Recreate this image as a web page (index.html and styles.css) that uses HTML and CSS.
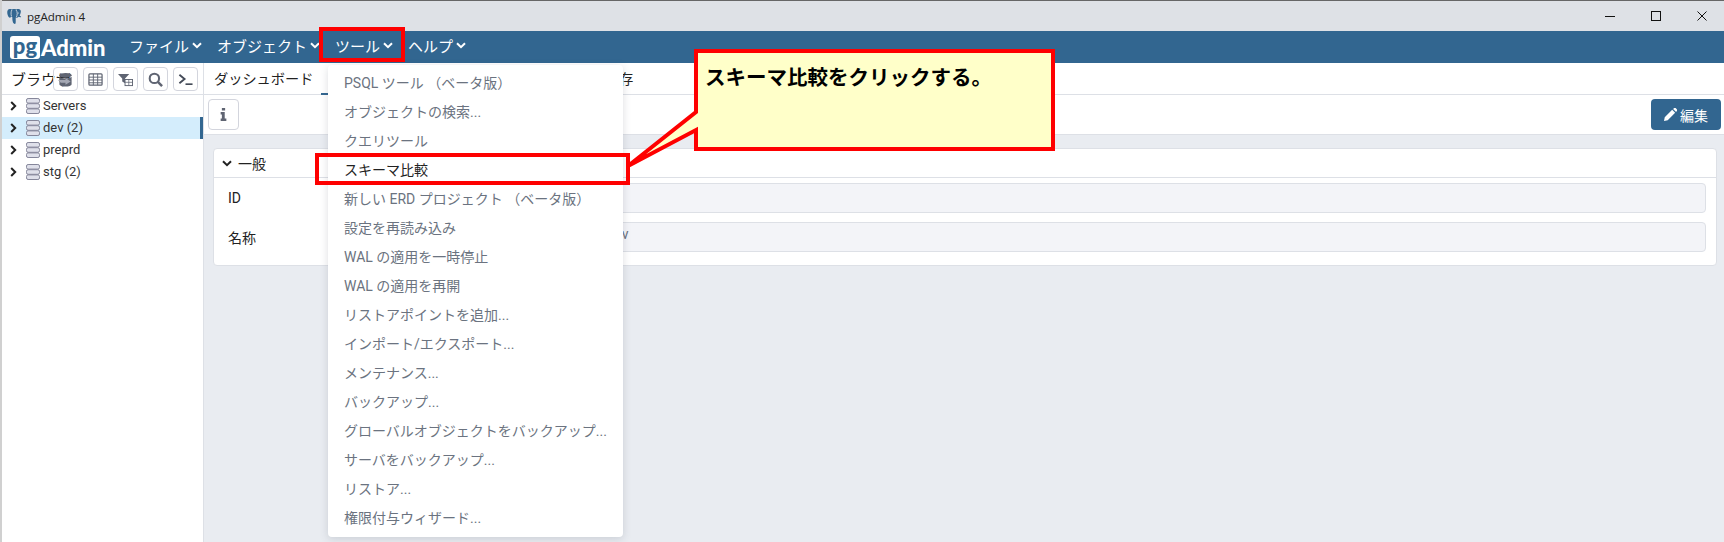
FILE: index.html
```html
<!DOCTYPE html>
<html lang="ja">
<head>
    <meta charset="UTF-8">
    <meta name="viewport" content="width=device-width, initial-scale=1.0">
    <title>pgAdmin 4</title>
    <link rel="stylesheet" href="styles.css">
</head>
<body>
    <svg class="sprites" aria-hidden="true">
        <symbol id="chevron" viewBox="0 0 10 7">
            <path d="M1 1.2 5 5.2 9 1.2" fill="none" stroke="currentColor" stroke-width="2"/>
        </symbol>
        <symbol id="chevron-right" viewBox="0 0 7 10">
            <path d="M1.2 1 5.2 5 1.2 9" fill="none" stroke="currentColor" stroke-width="2"/>
        </symbol>
        <symbol id="server" viewBox="0 0 14 16">
            <g fill="#dfe0ea" stroke="#85869a" stroke-width="1">
                <rect x="0.5" y="0.5" width="13" height="4.6" rx="1.6"/>
                <rect x="0.5" y="5.7" width="13" height="4.6" rx="1.6"/>
                <rect x="0.5" y="10.9" width="13" height="4.6" rx="1.6"/>
            </g>
        </symbol>
    </svg>

    <div class="window">
        <div class="titlebar">
            <div class="app-title">
                <svg class="elephant" viewBox="0 0 16 17">
                    <path d="M3 .5C1 .5 0 2.500 .3 5c.3 2.300 1.300 4.500 2.700 4.800.8.200 1.100-.6 1.300-1.500.4.500.9.900 1.400 1-.1 2.500.2 6 1.900 7 1.100.6 1.700-.4 1.700-2V9.800c1.300.3 2.400-.2 2.900-1.100.8.500 2.300.8 2.800.2.300-.5-1-.9-1.500-1.600 1.100-2 1.700-4 1-5.400C13.700.5 11.500.2 10 .9 8.500.3 6.500.3 5.200.9 4.500.6 3.700.5 3 .5z" fill="#336791"/>
                    <path d="M5.200 1.500c-1 1.700-1.100 4.500-.5 6.500M9.600 1.500c1.700 1.700 1.700 5.500.3 7.800M12.100 4.300l-.2 1.200" fill="none" stroke="#dee1e6" stroke-width=".9"/>
                </svg>
                <span>pgAdmin 4</span>
            </div>
            <div class="window-controls">
                <svg viewBox="0 0 12 12"><path d="M1 6.500H11" stroke="#111" stroke-width="1"/></svg>
                <svg viewBox="0 0 12 12"><rect x="1.500" y="1.500" width="9" height="9" fill="none" stroke="#111" stroke-width="1"/></svg>
                <svg viewBox="0 0 12 12"><path d="M1.500 1.500 10.500 10.500M10.500 1.500 1.500 10.500" stroke="#111" stroke-width="1"/></svg>
            </div>
        </div>

        <nav class="navbar">
            <div class="logo"><span class="logo-pg">pg</span><span class="logo-admin">Admin</span></div>
            <ul class="nav-menu">
                <li>ファイル<svg class="nav-chevron"><use href="#chevron"/></svg></li>
                <li>オブジェクト<svg class="nav-chevron"><use href="#chevron"/></svg></li>
                <li>ツール<svg class="nav-chevron"><use href="#chevron"/></svg></li>
                <li>ヘルプ<svg class="nav-chevron"><use href="#chevron"/></svg></li>
            </ul>
        </nav>

        <div class="workspace">
            <aside class="sidebar">
                <div class="sidebar-head">
                    <span class="sidebar-title">ブラウザ</span>
                    <div class="sidebar-tools">
                        <button class="tool-btn">
                            <svg viewBox="0 0 16 16">
                                <ellipse cx="8" cy="3.500" rx="6.500" ry="2.500" fill="#5f6472"/>
                                <path d="M1.500 5v8c0 1.400 3 2.500 6.500 2.500s6.500-1.100 6.500-2.500V5c-1.500 1.300-3.800 1.800-6.500 1.800S3 6.300 1.500 5z" fill="#5f6472"/>
                                <path d="M0 8.500h8v-2l5.500 3.500-5.500 3.500v-2H3" fill="#a4a7b3"/>
                            </svg>
                        </button>
                        <button class="tool-btn">
                            <svg viewBox="0 0 16 16">
                                <rect x="1" y="2" width="14" height="12" rx="1" fill="none" stroke="#5f6472" stroke-width="1.300"/>
                                <path d="M1 5.500H15M1 8.500H15M1 11.500H15M5.700 2V14M10.300 2V14" stroke="#5f6472" stroke-width="1"/>
                            </svg>
                        </button>
                        <button class="tool-btn">
                            <svg viewBox="0 0 16 16">
                                <path d="M0 2H12L7.500 7V12L4.500 10V7z" fill="#5f6472"/>
                                <rect x="7.500" y="8" width="8" height="6.500" fill="#fff" stroke="#5f6472"/>
                                <path d="M7.500 11H15.500M11.500 8V14.500" stroke="#5f6472" stroke-width=".8"/>
                            </svg>
                        </button>
                        <button class="tool-btn">
                            <svg viewBox="0 0 16 16">
                                <circle cx="6.800" cy="6.800" r="5" fill="none" stroke="#5f6472" stroke-width="2.200"/>
                                <path d="M10.500 10.500 15 15" stroke="#5f6472" stroke-width="2.600"/>
                            </svg>
                        </button>
                        <button class="tool-btn">
                            <svg viewBox="0 0 16 16">
                                <path d="M1.500 3 7 7.500 1.500 12" fill="none" stroke="#444b58" stroke-width="2"/>
                                <path d="M8 13H15.500" stroke="#444b58" stroke-width="1.800"/>
                            </svg>
                        </button>
                    </div>
                </div>
                <ul class="tree">
                    <li class="tree-row"><svg class="tree-arrow"><use href="#chevron-right"/></svg><svg class="tree-icon"><use href="#server"/></svg>Servers</li>
                    <li class="tree-row selected"><svg class="tree-arrow"><use href="#chevron-right"/></svg><svg class="tree-icon"><use href="#server"/></svg>dev (2)</li>
                    <li class="tree-row"><svg class="tree-arrow"><use href="#chevron-right"/></svg><svg class="tree-icon"><use href="#server"/></svg>preprd</li>
                    <li class="tree-row"><svg class="tree-arrow"><use href="#chevron-right"/></svg><svg class="tree-icon"><use href="#server"/></svg>stg (2)</li>
                </ul>
            </aside>

            <main class="main">
                <div class="tabs">
                    <div class="tab">ダッシュボード</div>
                    <div class="tab active"></div>
                    <div class="tab last">存</div>
                </div>
                <div class="toolbar">
                    <button class="info-btn">
                        <svg viewBox="0 0 8 16"><path d="M2 0h4v3H2zM.5 5H5.500v8H7.500v3H.5v-3H2V8H.5z" fill="#5f6472"/></svg>
                    </button>
                    <button class="edit-btn">
                        <svg viewBox="0 0 14 14"><path d="M0 14 .8 10 8.800 2 12 5.200 4 13.200zM9.800 1 11 0c.5-.3 1-.3 1.500 0l1.500 1.500c.3.500.3 1 0 1.500l-1 1.200z" fill="#fff"/></svg>
                        <span>編集</span>
                    </button>
                </div>
                <div class="content">
                    <section class="card">
                        <div class="card-head"><svg class="card-chevron"><use href="#chevron"/></svg>一般</div>
                        <div class="card-body">
                            <label class="field-label">ID</label>
                            <div class="field-value"></div>
                            <label class="field-label">名称</label>
                            <div class="field-value">dev</div>
                        </div>
                    </section>
                </div>
            </main>
        </div>
    </div>

    <ul class="dropdown">
        <li>PSQL ツール （ベータ版）</li>
        <li>オブジェクトの検索...</li>
        <li>クエリツール</li>
        <li class="current">スキーマ比較</li>
        <li>新しい ERD プロジェクト （ベータ版）</li>
        <li>設定を再読み込み</li>
        <li>WAL の適用を一時停止</li>
        <li>WAL の適用を再開</li>
        <li>リストアポイントを追加...</li>
        <li>インポート/エクスポート...</li>
        <li>メンテナンス...</li>
        <li>バックアップ...</li>
        <li>グローバルオブジェクトをバックアップ...</li>
        <li>サーバをバックアップ...</li>
        <li>リストア...</li>
        <li>権限付与ウィザード...</li>
    </ul>

    <!-- annotations drawn over the screenshot -->
    <div class="mark mark-nav"></div>
    <div class="mark mark-item"></div>
    <div class="callout">
        <svg class="callout-shape" viewBox="0 0 430 122">
            <path d="M66 2H423V100H66V81L-2 117 66 63z" fill="#ffffc9" stroke="#fe0000" stroke-width="4"/>
        </svg>
        <span class="callout-text">スキーマ比較をクリックする。</span>
    </div>
</body>
</html>
```

FILE: styles.css
```css
:root {
    --primary-color: #326690;
    --border-color: #dde0e6;
    --background-color: #e9ecf1;
    --text-color: #222;
    --muted-color: #6b7380;
    --mark-color: #fe0000;
}

* {
    box-sizing: border-box;
}

body {
    margin: 0;
    height: 542px;
    overflow: hidden;
    position: relative;
    background-color: #d0d0d0;
    color: var(--text-color);
    font-family: 'Roboto', 'Noto Sans CJK JP', sans-serif;
    font-size: 14px;
}

ul {
    list-style: none;
    margin: 0;
    padding: 0;
}

button {
    padding: 0;
    cursor: pointer;
    font-family: inherit;
}

.sprites {
    display: none;
}

.window {
    display: flex;
    flex-direction: column;
    height: 542px;
    margin-left: 2px;
    border-top: 1px solid #666;
}

/* title bar */
.titlebar {
    display: flex;
    justify-content: space-between;
    align-items: center;
    height: 30px;
    flex-shrink: 0;
    background-color: #dee1e6;
}

.app-title {
    display: flex;
    align-items: center;
    gap: 5px;
    padding-left: 5px;
    font-family: 'Open Sans', 'Noto Sans', sans-serif;
    font-size: 11.6px;
    color: #222;
}

.elephant {
    width: 15px;
    height: 17px;
}

.window-controls {
    display: flex;
    gap: 34px;
    padding-right: 16px;
}

.window-controls svg {
    width: 12px;
    height: 12px;
}

/* nav */
.navbar {
    display: flex;
    align-items: center;
    height: 32px;
    flex-shrink: 0;
    padding-left: 8px;
    background-color: var(--primary-color);
    color: white;
}

.logo {
    display: flex;
    align-items: center;
    width: 119px;
    font-family: 'Lato', sans-serif;
    font-weight: 900;
    font-size: 22px;
}

.logo-pg {
    display: block;
    width: 30px;
    height: 23px;
    line-height: 19px;
    text-align: center;
    background-color: white;
    color: var(--primary-color);
    border-radius: 3px;
}

.logo-admin {
    margin-left: 1px;
}

.nav-menu {
    display: flex;
    align-items: center;
    gap: 15px;
    padding-bottom: 3px;
    font-size: 15px;
}

.nav-menu li {
    display: flex;
    align-items: center;
    gap: 3px;
}

.nav-chevron {
    width: 10px;
    height: 7px;
}

/* sidebar */
.workspace {
    flex: 1;
    display: flex;
    min-height: 0;
}

.sidebar {
    width: 202px;
    flex-shrink: 0;
    background-color: white;
    border-right: 1px solid var(--border-color);
}

.sidebar-head {
    display: flex;
    align-items: center;
    height: 32px;
    padding-left: 9px;
    border-bottom: 1px solid var(--border-color);
    position: relative;
}

.sidebar-title {
    font-size: 15px;
}

.sidebar-tools {
    position: absolute;
    left: 51px;
    top: 4px;
    display: flex;
    gap: 5px;
}

.tool-btn {
    display: flex;
    align-items: center;
    justify-content: center;
    width: 25px;
    height: 24px;
    background: transparent;
    border: 1px solid #d3d5dd;
    border-radius: 4px;
}

.tool-btn svg {
    width: 15px;
    height: 15px;
}

.tree-row {
    display: flex;
    align-items: center;
    height: 22px;
    padding-left: 8px;
    padding-bottom: 1px;
    font-size: 13px;
    color: #333;
}

.tree-row.selected {
    background-color: #d4edfc;
    border-right: 3px solid var(--primary-color);
}

.tree-arrow {
    width: 7px;
    height: 10px;
    margin-right: 9px;
    color: #222;
}

.tree-icon {
    width: 14px;
    height: 16px;
    margin-right: 3px;
}

/* main panel */
.main {
    flex: 1;
    display: flex;
    flex-direction: column;
    min-width: 0;
    background-color: var(--background-color);
}

.tabs {
    display: flex;
    height: 32px;
    flex-shrink: 0;
    background-color: white;
    border-bottom: 1px solid var(--border-color);
}

.tab {
    padding: 5px 8px 0 10px;
    font-size: 14.2px;
}

.tab.active {
    flex: 0 0 298px;
    border-bottom: 2px solid var(--primary-color);
    margin-bottom: -1px;
}

.tab.last {
    padding-left: 0;
    font-size: 14px;
}

.toolbar {
    display: flex;
    justify-content: space-between;
    align-items: center;
    height: 40px;
    flex-shrink: 0;
    padding: 0 3px 0 4px;
    background-color: white;
    border-bottom: 1px solid var(--border-color);
}

.info-btn {
    display: flex;
    align-items: center;
    justify-content: center;
    width: 31px;
    height: 31px;
    background: white;
    border: 1px solid #d3d5dd;
    border-radius: 4px;
}

.info-btn svg {
    width: 7px;
    height: 13px;
}

.edit-btn {
    display: flex;
    align-items: center;
    justify-content: center;
    gap: 3px;
    width: 70px;
    height: 31px;
    background-color: var(--primary-color);
    color: white;
    border: none;
    border-radius: 4px;
    font-size: 14px;
}

.edit-btn svg {
    width: 13px;
    height: 13px;
}

.content {
    flex: 1;
    padding: 13px 7px 0 9px;
}

.card {
    height: 118px;
    background-color: white;
    border: 1px solid var(--border-color);
    border-radius: 4px;
}

.card-head {
    display: flex;
    align-items: center;
    gap: 6px;
    height: 29px;
    padding-left: 8px;
    border-bottom: 1px solid var(--border-color);
    font-size: 14px;
}

.card-chevron {
    width: 10px;
    height: 7px;
}

.card-body {
    display: grid;
    grid-template-columns: 25% 1fr;
    gap: 9px 0;
    padding: 5px 10px 0 14px;
    align-items: center;
}

.field-label {
    font-size: 14px;
}

.field-value {
    height: 30px;
    padding: 3px 8px;
    background-color: #f3f4f8;
    border: 1px solid var(--border-color);
    border-radius: 4px;
    color: #6b7380;
    font-size: 14px;
}

/* tools dropdown */
.dropdown {
    position: absolute;
    left: 328px;
    top: 65px;
    width: 295px;
    height: 472px;
    padding-top: 4px;
    background-color: white;
    border-radius: 4px;
    box-shadow: 0 2px 8px rgba(60, 70, 90, 0.18);
}

.dropdown li {
    height: 29px;
    line-height: 29px;
    padding-left: 16px;
    color: var(--muted-color);
    white-space: nowrap;
}

.dropdown li.current {
    color: var(--text-color);
}

/* annotations */
.mark {
    position: absolute;
    border: 4px solid var(--mark-color);
}

.mark-nav {
    left: 319px;
    top: 27px;
    width: 86px;
    height: 35px;
}

.mark-item {
    left: 315px;
    top: 153px;
    width: 315px;
    height: 32px;
}

.callout {
    position: absolute;
    left: 630px;
    top: 49px;
    width: 430px;
    height: 122px;
}

.callout-shape {
    display: block;
    width: 430px;
    height: 122px;
    overflow: visible;
}

.callout-text {
    position: absolute;
    left: 75px;
    top: 12px;
    font-size: 20.5px;
    font-weight: 700;
    color: black;
    white-space: nowrap;
}
```
